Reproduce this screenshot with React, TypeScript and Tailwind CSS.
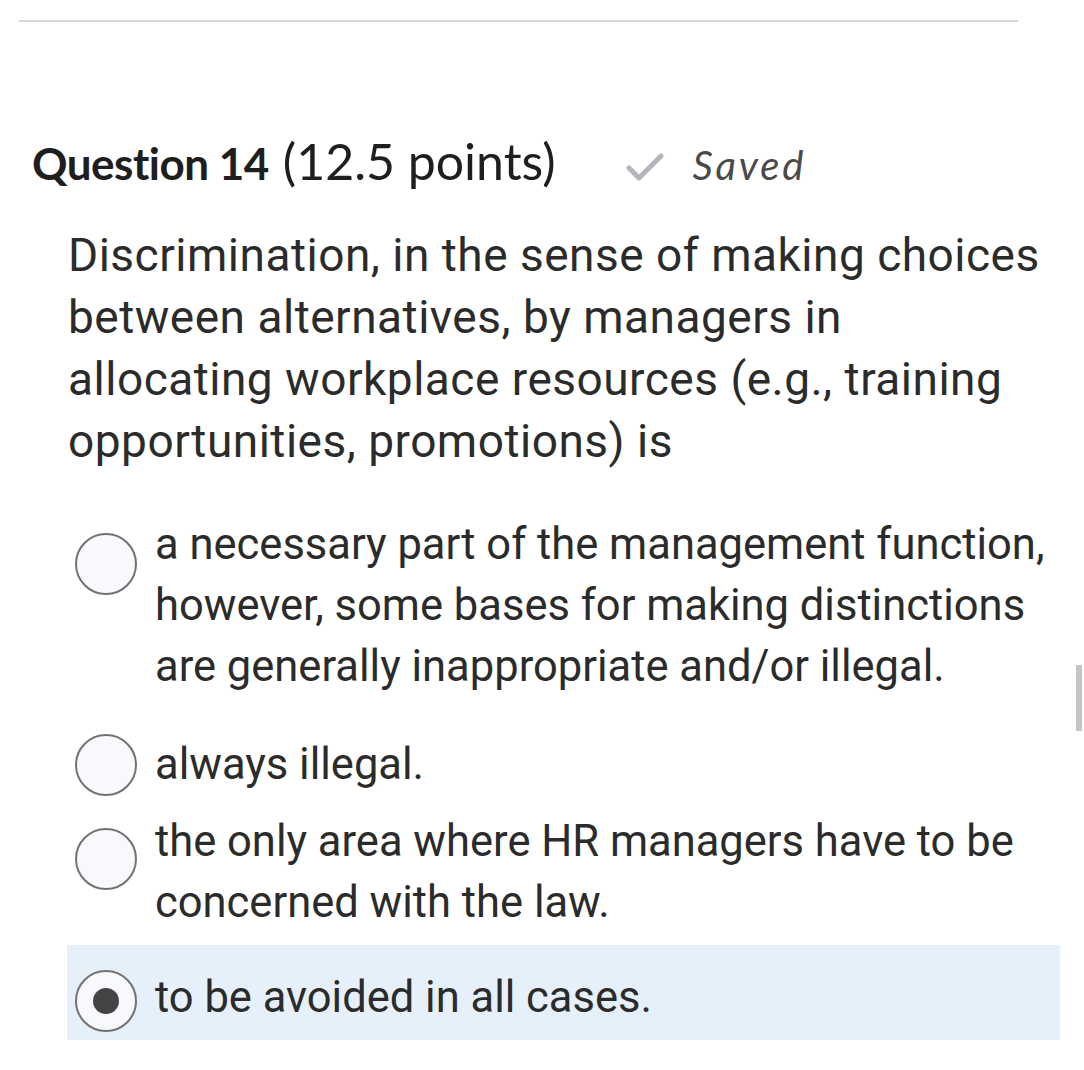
import React from "react";

function Radio({ checked }: { checked?: boolean }) {
  return (
    <div className="w-[62px] h-[62px] shrink-0 rounded-full border-2 border-[#727272] bg-[#f7f9fc] flex items-center justify-center">
      {checked && <div className="w-[26px] h-[26px] rounded-full bg-[#444444]" />}
    </div>
  );
}

function Option({ text, checked, top }: { text: React.ReactNode; checked?: boolean; top?: string }) {
  return (
    <div className="flex items-start gap-[18px]">
      <div className={top}>
        <Radio checked={checked} />
      </div>
      <div className="text-[43.5px] leading-[61px] text-[#2b2b2b]">{text}</div>
    </div>
  );
}

export default function App() {
  return (
    <div className="relative w-[1084px] h-[1070px] bg-white overflow-hidden" style={{ fontFamily: "Roboto, sans-serif" }}>
      <div className="ml-[19px] mt-[20px] w-[999px] h-[2px] bg-[#d6d6d6]" />
      <div className="flex items-baseline pl-[32px] mt-[102px]" style={{ fontFamily: "Lato, sans-serif" }}>
        <span className="text-[44px] font-bold text-[#1e1e1e] tracking-[-0.5px]">Question 14</span>
        <span className="text-[50px] text-[#1e1e1e] ml-[14px]">(12.5 points)</span>
        <span className="ml-[70px] flex items-baseline">
          <svg width="38" height="28" viewBox="0 0 38 28" className="self-center translate-y-[2px]">
            <path d="M3 15 L13 25 L35 3" fill="none" stroke="#b2b6bc" strokeWidth="5" strokeLinecap="round" strokeLinejoin="round" />
          </svg>
          <span className="ml-[29px] text-[40px] italic tracking-[2.8px] text-[#4a4a4a]">Saved</span>
        </span>
      </div>
      <div className="pl-[68px] mt-[25px] text-[46px] tracking-[0.5px] leading-[62px] text-[#2b2b2b]">
        Discrimination, in the sense of making choices<br />
        between alternatives, by managers in<br />
        allocating workplace resources (e.g., training<br />
        opportunities, promotions) is
      </div>
      <div className="ml-[67px] mr-[24px] mt-[42px] flex flex-col">
        <div className="pl-[8px] pr-[8px]">
          <Option
            top="mt-[19px]"
            text={
              <>
                a necessary part of the management function,<br />
                however, some bases for making distinctions<br />
                are generally inappropriate and/or illegal.
              </>
            }
          />
        </div>
        <div className="pl-[8px] mt-[37px]">
          <Option top="mt-[0px]" text="always illegal." />
        </div>
        <div className="pl-[8px] mt-[15px]">
          <Option
            top="mt-[17px]"
            text={
              <>
                the only area where HR managers have to be<br />
                concerned with the law.
              </>
            }
          />
        </div>
        <div className="mt-[12px] bg-[#e6f0fa] pl-[8px] pt-[22px] pb-[8px]">
          <Option checked top="mt-[3px]" text="to be avoided in all cases." />
        </div>
      </div>
      <div className="absolute left-[1076px] top-[665px] w-[6px] h-[66px] bg-[#c4c4c4]" />
    </div>
  );
}
